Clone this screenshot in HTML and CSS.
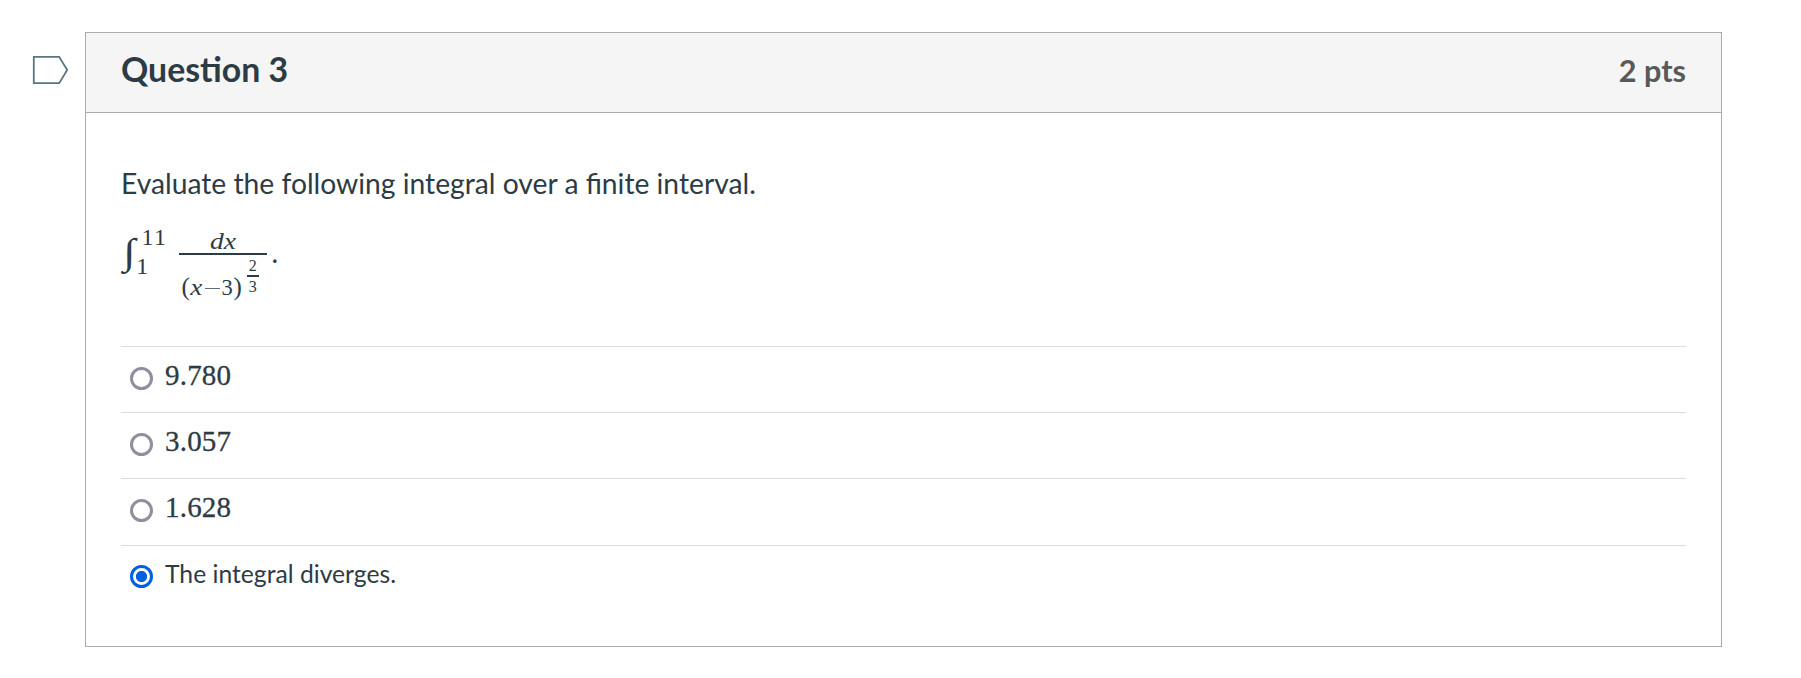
FILE: index.html
```html
<!DOCTYPE html>
<html lang="en">
<head>
    <meta charset="UTF-8">
    <meta name="viewport" content="width=device-width, initial-scale=1.0">
    <title>Question 3</title>
    <link rel="stylesheet" href="styles.css">
</head>
<body>
    <div class="question-row">
        <svg class="flag" width="37" height="30" viewBox="0 0 37 30">
            <path d="M1.8 1.8 H27.2 L35.2 15 L27.2 28.2 H1.8 Z"/>
        </svg>

        <div class="question">
            <div class="header">
                <h2 class="name">Question 3</h2>
                <span class="points">2 pts</span>
            </div>

            <div class="text">
                <p class="prompt">Evaluate the following integral over a finite interval.</p>

                <svg class="equation" width="160" height="80" viewBox="0 0 160 80">
                    <text class="integral" transform="translate(2.5 38.2) scale(1.2 1)">∫</text>
                    <text x="20.5" y="19" font-size="24" textLength="24.5">11</text>
                    <text x="15.3" y="48" font-size="24">1</text>
                    <text class="var" x="89" y="23" font-size="24" textLength="26" lengthAdjust="spacingAndGlyphs">dx</text>
                    <rect x="58" y="27" width="88" height="2"/>
                    <text x="60.5" y="69" font-size="25">(</text>
                    <text class="var" transform="translate(69.3 69) scale(1.18 1)" font-size="23">x</text>
                    <rect class="minus" x="84" y="62" width="15" height="1"/>
                    <text x="100.5" y="69" font-size="22.5">3</text>
                    <text x="112.5" y="69" font-size="25">)</text>
                    <text x="127.7" y="44.5" font-size="16">2</text>
                    <rect x="126" y="49" width="12" height="2"/>
                    <text x="127.7" y="66" font-size="16">3</text>
                    <text class="dot" x="150.5" y="37" font-size="28">.</text>
                </svg>
            </div>

            <div class="answers">
                <label class="answer">
                    <input type="radio" name="question3">
                    <span class="number">9.780</span>
                </label>
                <label class="answer">
                    <input type="radio" name="question3">
                    <span class="number">3.057</span>
                </label>
                <label class="answer">
                    <input type="radio" name="question3">
                    <span class="number">1.628</span>
                </label>
                <label class="answer">
                    <input type="radio" name="question3" checked>
                    <span class="label">The integral diverges.</span>
                </label>
            </div>
        </div>
    </div>
</body>
</html>
```

FILE: styles.css
```css
body {
    margin: 0;
    background: #fff;
    color: #2d3b45;
    font-family: Lato, sans-serif;
}
.question-row {
    display: flex;
    align-items: flex-start;
    padding: 32px 79px 0 32px;
}
.flag {
    flex: none;
    margin: 23px 16px 0 0;
    fill: #fff;
    stroke: #5a7482;
    stroke-width: 1.8;
}
.question {
    flex: 1;
    box-sizing: border-box;
    height: 615px;
    border: 1px solid #aaa;
}
.header {
    display: flex;
    justify-content: space-between;
    align-items: baseline;
    box-sizing: border-box;
    height: 80px;
    padding: 16px 35px 0;
    background: #f5f5f5;
    border-bottom: 1px solid #aaa;
}
.name {
    margin: 0;
    font-size: 33.8px;
    line-height: 41px;
}
.points {
    color: #595959;
    font-size: 30.6px;
    font-weight: bold;
}
.text {
    height: 233px;
    padding: 0 35px;
}
.prompt {
    margin: 0;
    padding-top: 49px;
    font-size: 28.25px;
    line-height: 42px;
}
.equation {
    display: block;
    margin-top: 22px;
    overflow: visible;
    fill: #2d3b45;
    font-family: "Liberation Serif", serif;
}
.var {
    font-style: italic;
}
.integral {
    font-size: 37px;
}
.minus {
    opacity: 0.75;
}
.dot {
    font-family: Lato, sans-serif;
}
.answers {
    padding: 0 35px;
}
.answer {
    display: flex;
    align-items: flex-start;
    box-sizing: border-box;
    height: 66.2px;
    padding: 11.6px 9px 0;
    border-top: 1px solid #ddd;
    font-size: 24.7px;
    line-height: 32px;
}
.answer input {
    appearance: none;
    flex: none;
    box-sizing: border-box;
    width: 23px;
    height: 23px;
    margin: 8.2px 12px 0 0;
    border: 3px solid #8f8f9d;
    border-radius: 50%;
}
.answer input:checked {
    border-color: #0060df;
    background: radial-gradient(circle, #0060df 5.2px, #fff 6px);
}
.label {
    margin-top: 1px;
}
.number {
    font-family: "Liberation Serif", serif;
    font-size: 29px;
    letter-spacing: 0.2px;
    -webkit-text-stroke: 0.3px #2d3b45;
}
```
